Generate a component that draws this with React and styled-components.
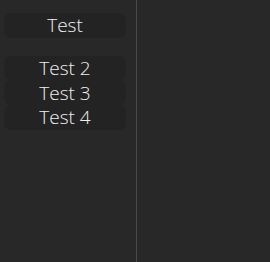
import styled, { createGlobalStyle } from 'styled-components';

const Global = createGlobalStyle`
  html, body, #root {
    margin: 0;
    height: 100%;
  }
  body {
    background: #282828;
    font-family: 'Open Sans', 'Noto Sans', sans-serif;
  }
`;

const App = () => {
  return (
    <>
      <Global />
      <Layout>
        <Sidebar>
          <Group>
            <Item>Test</Item>
          </Group>
          <Group>
            <Item>Test 2</Item>
            <Item>Test 3</Item>
            <Item>Test 4</Item>
          </Group>
        </Sidebar>
        <Main />
      </Layout>
    </>
  );
};

export default App;

const Layout = styled.div`
  display: flex;
  height: 100%;
`;

const Sidebar = styled.aside`
  width: 137px;
  box-sizing: border-box;
  padding: 13px 10px 0 4px;
  display: flex;
  flex-direction: column;
  gap: 18px;
  border-right: 1px solid #4a4a4a;
`;

const Group = styled.div`
  display: flex;
  flex-direction: column;
`;

const Item = styled.div`
  height: 24.7px;
  display: flex;
  align-items: center;
  justify-content: center;
  background: #232323;
  border-radius: 7px;
  color: #f0f0f0;
  font-size: 19px;
  font-weight: 300;
`;

const Main = styled.main`
  flex: 1;
`;
